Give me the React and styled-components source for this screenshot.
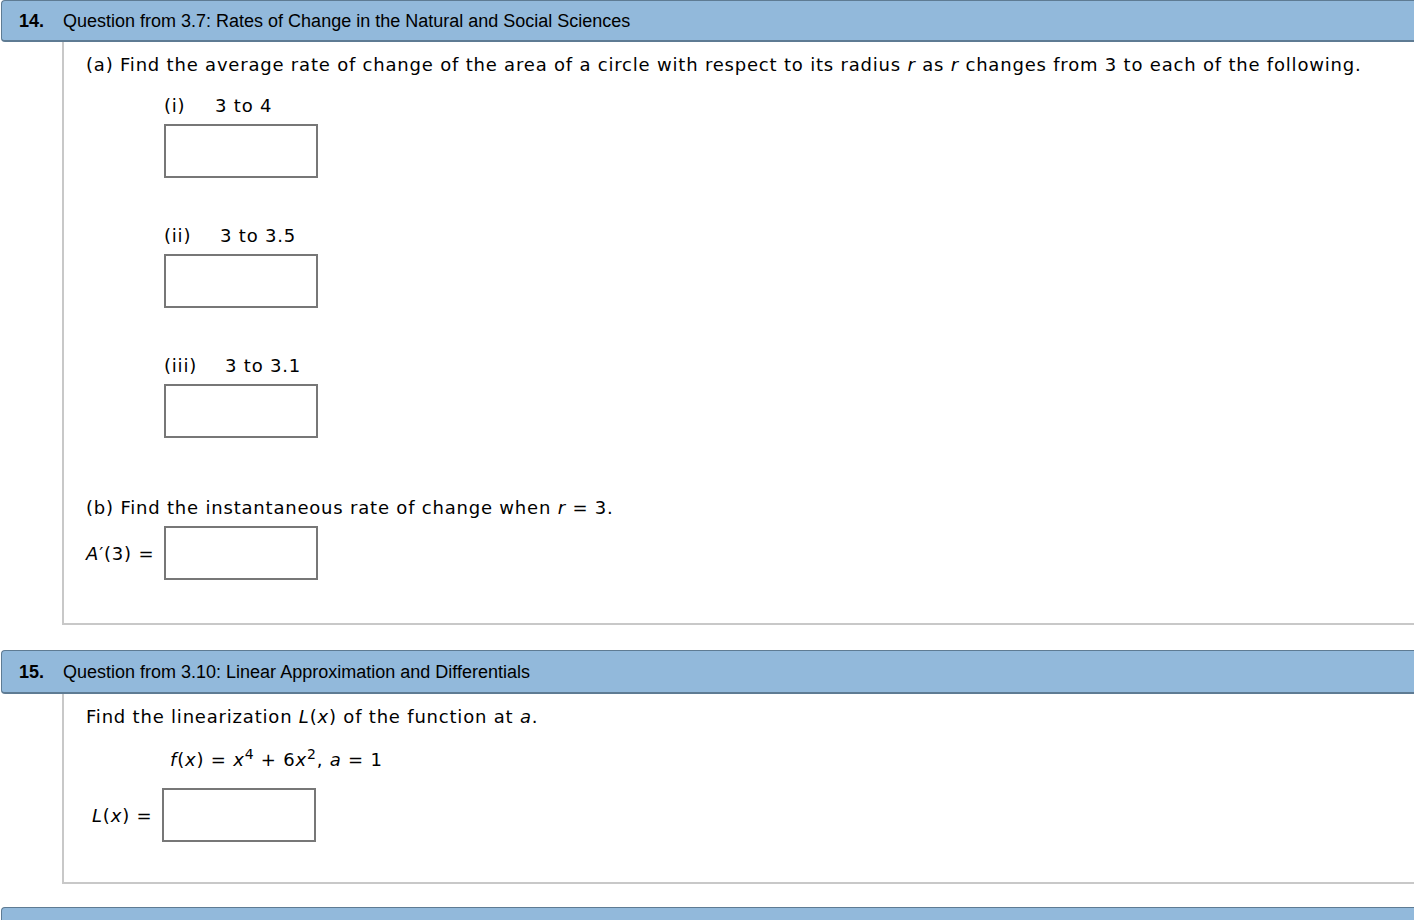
import styled, { createGlobalStyle } from "styled-components"

const Global = createGlobalStyle`
  html, body {
    margin: 0;
    padding: 0;
    background: #fff;
    overflow: hidden;
  }
`

const Page = styled.div`
  width: 1414px;
  height: 920px;
  overflow: hidden;
  font-family: "DejaVu Sans", Verdana, sans-serif;
  color: #000;
`

const QHeader = styled.div`
  display: flex;
  align-items: center;
  margin-top: ${p => p.$top || 0}px;
  margin-left: 1px;
  background: #92b9db;
  border: 1px solid #5e7b93;
  border-bottom-width: 2px;
  border-right: none;
  border-radius: 4px 0 0 4px;
  font-family: "Liberation Sans", Arial, sans-serif;
  font-size: 18px;
  box-sizing: border-box;
  height: ${p => p.$h || 43}px;
  padding-top: 1px;
`

const QNum = styled.span`
  font-weight: bold;
  width: 44px;
  padding-left: 17px;
`

const QBody = styled.div`
  margin-left: 62px;
  border-left: 2px solid #c8c8c8;
  border-bottom: 2px solid #c8c8c8;
  padding: ${p => p.$pad};
  height: ${p => p.$h}px;
  box-sizing: border-box;
  font-size: 18px;
  letter-spacing: 0.8px;
`

const Para = styled.div`
  line-height: 22px;
  margin-bottom: ${p => p.$mb || 0}px;
  margin-left: ${p => p.$ml || 0}px;
`

const Part = styled.div`
  margin-left: 78px;
  margin-bottom: ${p => p.$mb || 0}px;
`

const PartLabel = styled.div`
  display: flex;
  line-height: 22px;
  margin-bottom: 7px;
`

const Roman = styled.span`
  width: ${p => p.$w}px;
`

const Box = styled.div`
  width: 154px;
  height: 54px;
  border: 2px solid #777;
  box-sizing: border-box;
  background: #fff;
`

const AnswerRow = styled.div`
  display: flex;
  align-items: center;
  gap: 8px;
  margin-left: ${p => p.$ml || 0}px;
`

const AnswerLabel = styled.span`
  width: ${p => p.$w}px;
  white-space: nowrap;
`

const I = styled.i`
  font-style: italic;
`

const Sup = styled.sup`
  font-size: 14px;
  line-height: 0;
  vertical-align: 7px;
`

export default function App() {
  return (
    <Page>
      <Global />
      <QHeader $h={42}>
        <QNum>14.</QNum>
        <span>Question from 3.7: Rates of Change in the Natural and Social Sciences</span>
      </QHeader>
      <QBody $pad="12px 0 0 22px" $h={583}>
        <Para $mb={19}>
          (a) Find the average rate of change of the area of a circle with respect to its radius <I>r</I> as <I>r</I> changes from 3 to each of the following.
        </Para>
        <Part $mb={47}>
          <PartLabel><Roman $w={51}>(i)</Roman>3 to 4</PartLabel>
          <Box />
        </Part>
        <Part $mb={47}>
          <PartLabel><Roman $w={56}>(ii)</Roman>3 to 3.5</PartLabel>
          <Box />
        </Part>
        <Part $mb={59}>
          <PartLabel><Roman $w={61}>(iii)</Roman>3 to 3.1</PartLabel>
          <Box />
        </Part>
        <Para $mb={7}>
          (b) Find the instantaneous rate of change when <I>r</I> = 3.
        </Para>
        <AnswerRow>
          <AnswerLabel $w={70}><I>A</I>′(3) =</AnswerLabel>
          <Box />
        </AnswerRow>
      </QBody>
      <QHeader $top={25} $h={44}>
        <QNum>15.</QNum>
        <span>Question from 3.10: Linear Approximation and Differentials</span>
      </QHeader>
      <QBody $pad="12px 0 0 22px" $h={190}>
        <Para $mb={21}>
          Find the linearization <I>L</I>(<I>x</I>) of the function at <I>a</I>.
        </Para>
        <Para $ml={84} $mb={17}>
          <I>f</I>(<I>x</I>) = <I>x</I><Sup>4</Sup> + 6<I>x</I><Sup>2</Sup>, <I>a</I> = 1
        </Para>
        <AnswerRow $ml={6}>
          <AnswerLabel $w={62}><I>L</I>(<I>x</I>) =</AnswerLabel>
          <Box />
        </AnswerRow>
      </QBody>
      <QHeader $top={23} $h={44} />
    </Page>
  )
}
